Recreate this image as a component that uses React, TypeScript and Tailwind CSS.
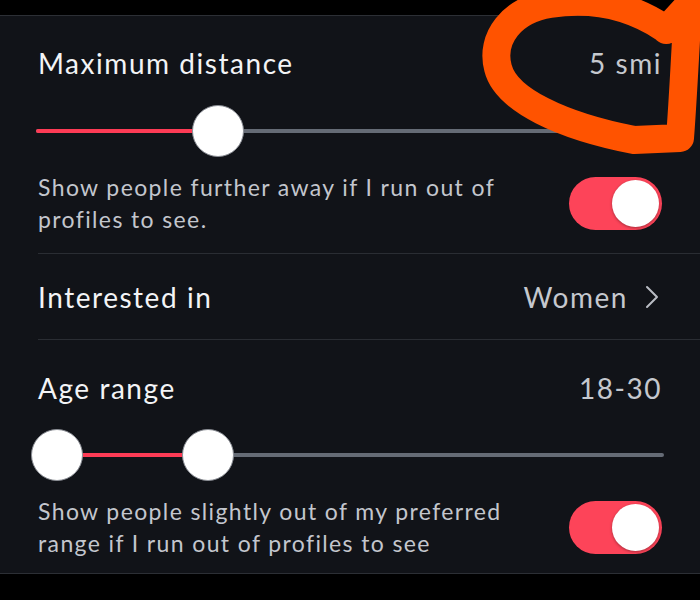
function Toggle() {
  return (
    <div className="flex h-[53px] w-[93px] shrink-0 items-center justify-end rounded-full bg-[#fd4459] pr-[3px]">
      <div className="h-[47px] w-[47px] rounded-full bg-white shadow-[0_1px_3px_rgba(0,0,0,0.35)]" />
    </div>
  )
}

function Thumb({ className }: { className: string }) {
  return (
    <div
      className={
        'absolute top-0 h-[52px] w-[52px] rounded-full border border-[#8a8d94] bg-white ' + className
      }
    />
  )
}

function Divider() {
  return <div className="ml-[38px] h-px bg-[#2a2d33]" />
}

export default function App() {
  return (
    <div
      className="relative h-[600px] w-[700px] overflow-hidden bg-black text-[#f3f4f6]"
      style={{ fontFamily: 'Lato, "Noto Sans", sans-serif' }}
    >
      <div className="mt-[15px] border-y border-[#2c2f35] bg-[#111318]">
        {/* Maximum distance */}
        <section className="px-[38px] pb-[18px] pt-[30px]">
          <div className="flex h-[34px] items-center justify-between text-[28px] tracking-[0.055em]">
            <span>Maximum distance</span>
            <span className="text-[#c5c8ce]">5 smi</span>
          </div>
          <div className="relative mx-[-2px] mt-[25px] h-[52px]">
            <div className="absolute left-0 right-0 top-[24px] h-[4px] rounded-full bg-[#656b75]" />
            <div className="absolute left-0 top-[24px] h-[4px] w-[160px] rounded-full bg-[#fd3b55]" />
            <Thumb className="left-[156px]" />
          </div>
          <div className="mt-[14px] flex items-center justify-between">
            <p className="text-[23px] leading-[32px] tracking-[0.06em] text-[#c3c6cd]">
              Show people further away if I run out of
              <br />
              profiles to see.
            </p>
            <Toggle />
          </div>
        </section>
        <Divider />

        {/* Interested in */}
        <section className="flex h-[85px] items-center justify-between px-[38px] text-[28px] tracking-[0.055em]">
          <span>Interested in</span>
          <span className="flex items-center gap-[16px] text-[#c5c8ce]">
            Women
            <svg width="16" height="24" viewBox="0 0 16 24" className="mr-[2px]">
              <polyline
                points="3,2 13,12 3,22"
                fill="none"
                stroke="#b9bcc3"
                strokeWidth="2"
                strokeLinecap="round"
                strokeLinejoin="round"
              />
            </svg>
          </span>
        </section>
        <Divider />

        {/* Age range */}
        <section className="px-[38px] pb-[14px] pt-[31px]">
          <div className="flex h-[34px] items-center justify-between text-[28px] tracking-[0.055em]">
            <span>Age range</span>
            <span className="text-[#c5c8ce]">18-30</span>
          </div>
          <div className="relative mx-[-7px] mt-[24px] h-[52px]">
            <div className="absolute left-[26px] right-[5px] top-[24px] h-[4px] rounded-full bg-[#656b75]" />
            <div className="absolute left-[40px] top-[24px] h-[4px] w-[120px] bg-[#fd3b55]" />
            <Thumb className="left-0" />
            <Thumb className="left-[151px]" />
          </div>
          <div className="mt-[14px] flex items-center justify-between">
            <p className="text-[23px] leading-[32px] tracking-[0.06em] text-[#c3c6cd]">
              Show people slightly out of my preferred
              <br />
              range if I run out of profiles to see
            </p>
            <Toggle />
          </div>
        </section>
      </div>

      {/* hand-drawn annotation */}
      <svg
        className="pointer-events-none absolute left-0 top-0"
        width="700"
        height="600"
        viewBox="0 0 700 600"
      >
        <path
          d="M 664 28 C 628 4, 588 -2, 550 4 C 512 10, 490 38, 498 68 C 506 100, 562 126, 634 140 L 680 138 C 683 100, 685 55, 688 6 L 666 30"
          fill="none"
          stroke="#ff5300"
          strokeWidth="28"
          strokeLinecap="round"
          strokeLinejoin="round"
        />
      </svg>
    </div>
  )
}
